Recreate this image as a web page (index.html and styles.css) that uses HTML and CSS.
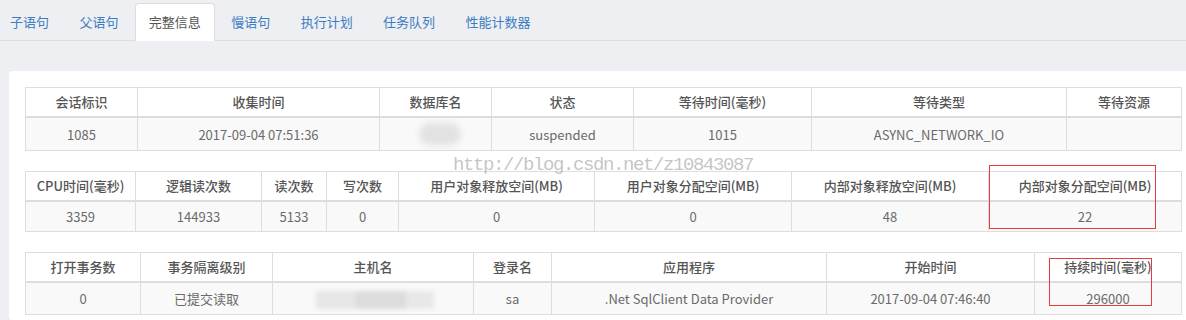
FILE: index.html
```html
<!DOCTYPE html>
<html lang="zh-CN">
<head>
<meta charset="utf-8">
<title>完整信息</title>
<link rel="stylesheet" href="styles.css">
</head>
<body>
<nav class="nav">
  <ul class="tabs">
    <li class="tab"><a>子语句</a></li>
    <li class="tab"><a>父语句</a></li>
    <li class="tab active"><a>完整信息</a></li>
    <li class="tab"><a>慢语句</a></li>
    <li class="tab"><a>执行计划</a></li>
    <li class="tab"><a>任务队列</a></li>
    <li class="tab"><a>性能计数器</a></li>
  </ul>
</nav>

<section class="panel">
  <table class="grid t1">
    <colgroup><col><col><col><col><col><col><col></colgroup>
    <thead>
      <tr><th>会话标识</th><th>收集时间</th><th>数据库名</th><th>状态</th><th>等待时间(毫秒)</th><th>等待类型</th><th>等待资源</th></tr>
    </thead>
    <tbody>
      <tr><td>1085</td><td>2017-09-04 07:51:36</td><td><span class="blur blur-db"></span></td><td>suspended</td><td>1015</td><td>ASYNC_NETWORK_IO</td><td></td></tr>
    </tbody>
  </table>

  <table class="grid t2">
    <colgroup><col><col><col><col><col><col><col><col></colgroup>
    <thead>
      <tr><th>CPU时间(毫秒)</th><th>逻辑读次数</th><th>读次数</th><th>写次数</th><th>用户对象释放空间(MB)</th><th>用户对象分配空间(MB)</th><th>内部对象释放空间(MB)</th><th>内部对象分配空间(MB)</th></tr>
    </thead>
    <tbody>
      <tr><td>3359</td><td>144933</td><td>5133</td><td>0</td><td>0</td><td>0</td><td>48</td><td>22</td></tr>
    </tbody>
  </table>

  <table class="grid t3">
    <colgroup><col><col><col><col><col><col><col></colgroup>
    <thead>
      <tr><th>打开事务数</th><th>事务隔离级别</th><th>主机名</th><th>登录名</th><th>应用程序</th><th>开始时间</th><th>持续时间(毫秒)</th></tr>
    </thead>
    <tbody>
      <tr><td>0</td><td>已提交读取</td><td><span class="blur blur-host"><i class="b1"></i><i class="b2"></i><i class="b3"></i></span></td><td>sa</td><td>.Net SqlClient Data Provider</td><td>2017-09-04 07:46:40</td><td>296000</td></tr>
    </tbody>
  </table>
</section>

<div class="watermark">http://blog.csdn.net/z10843087</div>
<div class="mark mark-1"></div>
<div class="mark mark-2"></div>
</body>
</html>
```

FILE: styles.css
```css
html, body {
  margin: 0;
  padding: 0;
}
body {
  position: relative;
  width: 1186px;
  height: 320px;
  overflow: hidden;
  background: #eeeff3;
  font-family: "Noto Sans CJK SC", "Liberation Sans", sans-serif;
  color: #555;
}

/* tabs */
.nav {
  padding-top: 3px;
}
.tabs {
  list-style: none;
  margin: 0;
  padding: 0;
  display: flex;
  border-bottom: 1px solid #dcdcdc;
}
.tab {
  margin-bottom: -1px;
  margin-right: 2.4px;
}
.tab:first-child {
  margin-left: -4px;
}
.tab a {
  display: block;
  padding: 9px 13px;
  line-height: 18px;
  font-size: 13px;
  color: #3b7dc1;
  border: 1px solid transparent;
  border-radius: 4px 4px 0 0;
}
.tab.active a {
  color: #555;
  background: #fff;
  border-color: #dcdcdc;
  border-bottom-color: transparent;
}

/* panel */
.panel {
  margin: 30px 0 0 9px;
  background: #fff;
  border-radius: 4px 0 0 4px;
  padding: 16px 5px 5px 16px;
}

.grid {
  width: 1156px;
  table-layout: fixed;
  border-collapse: collapse;
  margin-bottom: 20px;
  font-size: 13px;
}
.grid:last-child {
  margin-bottom: 0;
}
.grid th,
.grid td {
  border: 1px solid #dddddd;
  text-align: center;
  padding: 5px 4px;
  white-space: nowrap;
  overflow: hidden;
}
.grid th {
  line-height: 18px;
  font-weight: 500;
  color: #555;
  background: #fff;
  border-bottom-width: 2px;
}
.grid td {
  line-height: 19px;
  color: #6a6a6a;
  background: #f9f9f9;
}

.t1 col:nth-child(1) { width: 112px; }
.t1 col:nth-child(2) { width: 242px; }
.t1 col:nth-child(3) { width: 112px; }
.t1 col:nth-child(4) { width: 142px; }
.t1 col:nth-child(5) { width: 178px; }
.t1 col:nth-child(6) { width: 255px; }
.t1 col:nth-child(7) { width: 115px; }

.t2 col:nth-child(1) { width: 110px; }
.t2 col:nth-child(2) { width: 126px; }
.t2 col:nth-child(3) { width: 65px; }
.t2 col:nth-child(4) { width: 72px; }
.t2 col:nth-child(5) { width: 196px; }
.t2 col:nth-child(6) { width: 197px; }
.t2 col:nth-child(7) { width: 197px; }
.t2 col:nth-child(8) { width: 193px; }

.t3 col:nth-child(1) { width: 115px; }
.t3 col:nth-child(2) { width: 132px; }
.t3 col:nth-child(3) { width: 201px; }
.t3 col:nth-child(4) { width: 78px; }
.t3 col:nth-child(5) { width: 275px; }
.t3 col:nth-child(6) { width: 208px; }
.t3 col:nth-child(7) { width: 147px; }

/* blurred (redacted) values */
.blur {
  display: inline-block;
  vertical-align: middle;
  filter: blur(3px);
}
.blur-db {
  width: 42px;
  height: 22px;
  margin-left: 8px;
  border-radius: 11px;
  background: #e2e2e2;
}
.blur-host {
  display: inline-flex;
  height: 18px;
  margin-left: 4px;
  filter: blur(2px);
}
.blur-host i {
  display: block;
  height: 18px;
}
.blur-host .b1 { width: 40px; background: #e6e6e6; }
.blur-host .b2 { width: 50px; background: #dcdcdc; }
.blur-host .b3 { width: 28px; background: #e8e8e8; }

/* overlays */
.watermark {
  position: absolute;
  left: 453px;
  top: 156px;
  font-family: "Liberation Mono", monospace;
  font-size: 19px;
  line-height: 19px;
  letter-spacing: -1.4px;
  color: rgba(140, 140, 140, 0.5);
  white-space: nowrap;
  pointer-events: none;
}
.mark {
  position: absolute;
  box-sizing: border-box;
  border: 1px solid #e53c3c;
}
.mark-1 {
  left: 989px;
  top: 165px;
  width: 167px;
  height: 64px;
}
.mark-2 {
  left: 1049px;
  top: 258px;
  width: 103px;
  height: 48px;
}
```
